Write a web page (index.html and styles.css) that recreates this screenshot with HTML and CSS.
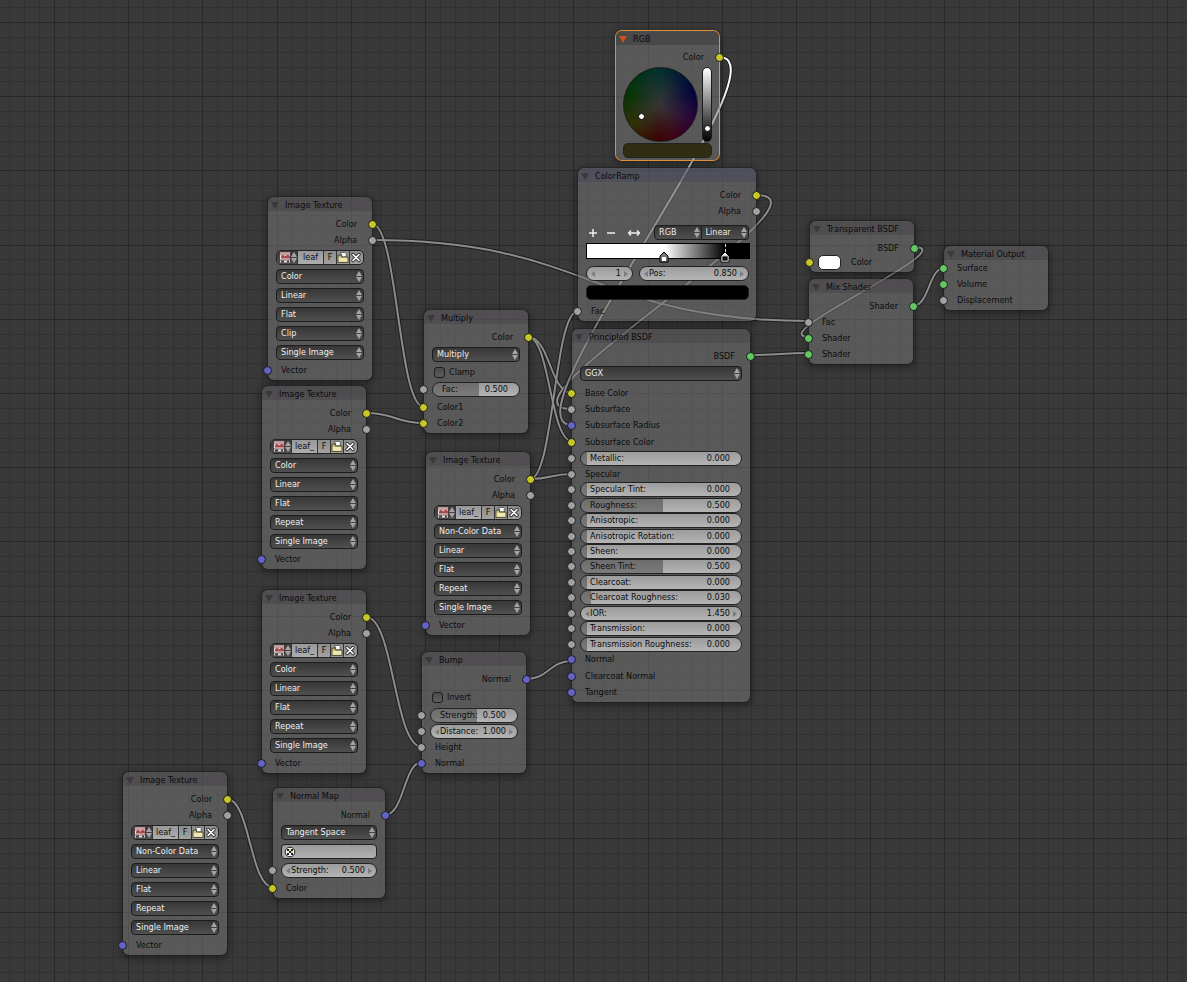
FILE: index.html
```
<!DOCTYPE html>
<html lang="en">
  <head>
    <meta charset="UTF-8" />
    <meta name="viewport" content="width=device-width, initial-scale=1" />
    <title>Leaf material - node editor</title>
    <link rel="stylesheet" href="styles.css">
  </head>

  <body>
    <!-- shared icons -->
    <svg class="defs" aria-hidden="true">
      <symbol id="icon-image" viewBox="0 0 12 12">
        <rect x=".5" y=".5" width="11" height="11" fill="#e9e4e2" stroke="#4a4040"/>
        <path d="M1 1h10v3H1z" fill="#c9a0a2"/>
        <path d="M2 5l2-2 2 2 3-2 2 2v2H2z" fill="#a8484e"/>
        <path d="M1 8h10v1H1z" fill="#7a5a5c"/>
        <path d="M2 9h3v2H2zM8 9h2v2H8z" fill="#3c3c46"/>
      </symbol>
      <symbol id="icon-folder" viewBox="0 0 13 13">
        <path d="M4 1h5l1 1v4H4z" fill="#fff" stroke="#555"/>
        <path d="M1 4h3v-1h1v3h7v6H1z" fill="#c9c084" stroke="#4c4830"/>
        <path d="M2 7h9v4H2z" fill="#efe8b4"/>
      </symbol>
      <symbol id="icon-close" viewBox="0 0 12 12">
        <path d="M3 3l6 6M9 3l-6 6" stroke="#333" stroke-width="3.4" stroke-linecap="round"/>
        <path d="M3 3l6 6M9 3l-6 6" stroke="#fff" stroke-width="1.6" stroke-linecap="round"/>
      </symbol>
      <symbol id="icon-uv" viewBox="0 0 12 12">
        <circle cx="6" cy="6" r="4.8" fill="#f4f4f4" stroke="#222"/>
        <path d="M3 3h2v2H3zM7 3h2v2H7zM5 5h2v2H5zM3 7h2v2H3zM7 7h2v2H7z" fill="#222"/>
        <path d="M5 3h2v2H5zM7 5h2v2H7z" fill="#d9d98a"/>
      </symbol>
    </svg>

    <main class="canvas">
      <!-- background grid -->
      <svg class="grid" aria-hidden="true">
        <defs>
          <pattern id="grid" x="54" y="22" width="371" height="371" patternUnits="userSpaceOnUse">
            <path class="minor" d="M15.5 0V371M30.5 0V371M45.5 0V371M59.5 0V371M89.5 0V371M104.5 0V371M119.5 0V371M134.5 0V371M163.5 0V371M178.5 0V371M193.5 0V371M208.5 0V371M237.5 0V371M252.5 0V371M267.5 0V371M282.5 0V371M312.5 0V371M326.5 0V371M341.5 0V371M356.5 0V371"/>
            <path class="minor" d="M0 15.5H371M0 30.5H371M0 45.5H371M0 59.5H371M0 89.5H371M0 104.5H371M0 119.5H371M0 134.5H371M0 163.5H371M0 178.5H371M0 193.5H371M0 208.5H371M0 237.5H371M0 252.5H371M0 267.5H371M0 282.5H371M0 312.5H371M0 326.5H371M0 341.5H371M0 356.5H371"/>
            <path class="major" d="M.5 0V371M74.5 0V371M148.5 0V371M223.5 0V371M297.5 0V371M0 .5H371M0 74.5H371M0 148.5H371M0 223.5H371M0 297.5H371"/>
          </pattern>
        </defs>
        <rect width="100%" height="100%" fill="url(#grid)"/>
      </svg>

      <!-- links, drawn under the translucent nodes -->
      <svg class="wires" aria-hidden="true">
        <defs>
          <linearGradient id="picked" gradientUnits="userSpaceOnUse" x1="0" y1="57" x2="0" y2="426">
            <stop offset="0" stop-color="#fff"/>
            <stop offset=".15" stop-color="#f0f0f0"/>
            <stop offset=".32" stop-color="#bbb"/>
            <stop offset="1" stop-color="#888"/>
          </linearGradient>
          <g id="links">
            <path d="M372 224C398 224 398 407 424 407"/>
            <path d="M372 240C591 240 591 321 810 321"/>
            <path d="M366 413C395 413 395 423 424 423"/>
            <path d="M528 337C550 337 550 393 572 393"/>
            <path d="M528 337C550 337 550 441 572 441"/>
            <path d="M530 479C551 479 551 474 572 474"/>
            <path d="M530 479C554 479 554 311 578 311"/>
            <path d="M526 679C549 679 549 661 572 661"/>
            <path d="M366 617C394 617 394 747 422 747"/>
            <path d="M385 815C404 815 404 762 422 762"/>
            <path d="M227 799C250 799 250 887 273 887"/>
            <path d="M750 355C780 355 780 353 810 353"/>
            <path d="M914 247C966 247 758 337 810 337"/>
            <path d="M913 306C929 306 929 268 944 268"/>
            <path d="M756 195C848 195 480 409 572 409"/>
          </g>
          <path id="picked-link" d="M719 57C792 57 499 425 572 425"/>
        </defs>
        <use href="#links" class="edge"/>
        <use href="#links" class="core"/>
        <use href="#picked-link" class="edge"/>
        <use href="#picked-link" class="core picked"/>
      </svg>

      <!-- RGB -->
      <section class="node node-rgb selected">
        <h2>RGB</h2>
        <div class="body">
          <div class="row out">Color<i class="socket color"></i></div>
          <div class="picker">
            <div class="wheel"><i class="knob"></i></div>
            <div class="value"><i class="knob"></i></div>
          </div>
          <button class="swatch olive" aria-label="Picked color"></button>
        </div>
      </section>

      <!-- ColorRamp -->
      <section class="node node-ramp">
        <h2>ColorRamp</h2>
        <div class="body">
          <div class="row out">Color<i class="socket color"></i></div>
          <div class="row out">Alpha<i class="socket"></i></div>
          <div class="ramp-tools">
            <button aria-label="Add stop"><svg viewBox="0 0 12 12"><path d="M6 2v8M2 6h8"/></svg></button>
            <button aria-label="Remove stop"><svg viewBox="0 0 12 12"><path d="M2 6h8"/></svg></button>
            <button aria-label="Flip"><svg viewBox="0 0 12 12"><path d="M1 6h10M3 3.5L.5 6 3 8.500M9 3.5L11.5 6 9 8.500"/></svg></button>
            <div class="dropdown first"><select aria-label="Color mode"><option>RGB</option><option>HSV</option></select></div>
            <div class="dropdown last"><select aria-label="Interpolation"><option>Linear</option><option>Ease</option></select></div>
          </div>
          <div class="ramp">
            <svg class="stop stop-a" viewBox="0 0 10 12"><path d="M1 11V5l4-4 4 4v6z" fill="#777" stroke="#000"/><path d="M3 6h4v4H3z" fill="#fff"/></svg>
            <i class="stop-line"></i>
            <svg class="stop stop-b" viewBox="0 0 10 12"><path d="M1 11V5l4-4 4 4v6z" fill="#fff" stroke="#000"/><path d="M2 5h6v5H2z" fill="#111" stroke="#aaa"/></svg>
          </div>
          <div class="ramp-fields">
            <label class="field number"><input type="text" value="1" aria-label="Active stop"></label>
            <label class="field number">Pos:<input type="text" value="0.850"></label>
          </div>
          <button class="swatch black" aria-label="Stop color"></button>
          <div class="row in">Fac<i class="socket"></i></div>
        </div>
      </section>

      <!-- Principled BSDF -->
      <section class="node node-principled">
        <h2>Principled BSDF</h2>
        <div class="body">
          <div class="row out">BSDF<i class="socket shader"></i></div>
          <div class="dropdown"><select aria-label="Distribution"><option>GGX</option><option>Multiscatter GGX</option></select></div>
          <div class="stack">
            <div class="row in">Base Color<i class="socket color"></i></div>
            <div class="row in">Subsurface<i class="socket"></i></div>
            <div class="row in">Subsurface Radius<i class="socket vector"></i></div>
            <div class="row in">Subsurface Color<i class="socket color"></i></div>
            <div class="row"><i class="socket"></i><label class="field" style="--fill: 4%">Metallic:<input type="text" value="0.000"></label></div>
            <div class="row in">Specular<i class="socket"></i></div>
            <div class="row"><i class="socket"></i><label class="field" style="--fill: 4%">Specular Tint:<input type="text" value="0.000"></label></div>
            <div class="row"><i class="socket"></i><label class="field" style="--fill: 51%">Roughness:<input type="text" value="0.500"></label></div>
            <div class="row"><i class="socket"></i><label class="field" style="--fill: 4%">Anisotropic:<input type="text" value="0.000"></label></div>
            <div class="row"><i class="socket"></i><label class="field" style="--fill: 4%">Anisotropic Rotation:<input type="text" value="0.000"></label></div>
            <div class="row"><i class="socket"></i><label class="field" style="--fill: 4%">Sheen:<input type="text" value="0.000"></label></div>
            <div class="row"><i class="socket"></i><label class="field" style="--fill: 51%">Sheen Tint:<input type="text" value="0.500"></label></div>
            <div class="row"><i class="socket"></i><label class="field" style="--fill: 4%">Clearcoat:<input type="text" value="0.000"></label></div>
            <div class="row"><i class="socket"></i><label class="field" style="--fill: 6%">Clearcoat Roughness:<input type="text" value="0.030"></label></div>
            <div class="row"><i class="socket"></i><label class="field number">IOR:<input type="text" value="1.450"></label></div>
            <div class="row"><i class="socket"></i><label class="field" style="--fill: 4%">Transmission:<input type="text" value="0.000"></label></div>
            <div class="row"><i class="socket"></i><label class="field" style="--fill: 4%">Transmission Roughness:<input type="text" value="0.000"></label></div>
            <div class="row in">Normal<i class="socket vector"></i></div>
            <div class="row in">Clearcoat Normal<i class="socket vector"></i></div>
            <div class="row in">Tangent<i class="socket vector"></i></div>
          </div>
        </div>
      </section>

      <!-- Transparent BSDF -->
      <section class="node node-transparent">
        <h2>Transparent BSDF</h2>
        <div class="body">
          <div class="row out">BSDF<i class="socket shader"></i></div>
          <div class="row color-row"><i class="socket color"></i><button class="swatch white" aria-label="Transparent color"></button>Color</div>
        </div>
      </section>

      <!-- Mix Shader -->
      <section class="node node-mix">
        <h2>Mix Shader</h2>
        <div class="body">
          <div class="row out">Shader<i class="socket shader"></i></div>
          <div class="row in">Fac<i class="socket"></i></div>
          <div class="row in">Shader<i class="socket shader"></i></div>
          <div class="row in">Shader<i class="socket shader"></i></div>
        </div>
      </section>

      <!-- Material Output -->
      <section class="node node-output">
        <h2>Material Output</h2>
        <div class="body">
          <div class="row in">Surface<i class="socket shader"></i></div>
          <div class="row in">Volume<i class="socket shader"></i></div>
          <div class="row in">Displacement<i class="socket"></i></div>
        </div>
      </section>

      <!-- Image Texture 1 -->
      <section class="node node-image-1">
        <h2>Image Texture</h2>
        <div class="body">
          <div class="row out">Color<i class="socket color"></i></div>
          <div class="row out">Alpha<i class="socket"></i></div>
          <div class="image-bar">
            <button class="browse" aria-label="Browse image"><svg><use href="#icon-image"/></svg></button>
            <input type="text" value="leaf" aria-label="Image name">
            <button>F</button>
            <button aria-label="Open image"><svg><use href="#icon-folder"/></svg></button>
            <button aria-label="Unlink image"><svg><use href="#icon-close"/></svg></button>
          </div>
          <div class="dropdown"><select aria-label="Color space"><option>Color</option><option>Non-Color Data</option></select></div>
          <div class="dropdown"><select aria-label="Interpolation"><option>Linear</option><option>Closest</option></select></div>
          <div class="dropdown"><select aria-label="Projection"><option>Flat</option><option>Box</option></select></div>
          <div class="dropdown"><select aria-label="Extension"><option>Clip</option><option>Repeat</option></select></div>
          <div class="dropdown"><select aria-label="Source"><option>Single Image</option><option>Movie</option></select></div>
          <div class="row in">Vector<i class="socket vector"></i></div>
        </div>
      </section>

      <!-- Image Texture 2 -->
      <section class="node node-image-2">
        <h2>Image Texture</h2>
        <div class="body">
          <div class="row out">Color<i class="socket color"></i></div>
          <div class="row out">Alpha<i class="socket"></i></div>
          <div class="image-bar">
            <button class="browse" aria-label="Browse image"><svg><use href="#icon-image"/></svg></button>
            <input type="text" value="leaf_" aria-label="Image name">
            <button>F</button>
            <button aria-label="Open image"><svg><use href="#icon-folder"/></svg></button>
            <button aria-label="Unlink image"><svg><use href="#icon-close"/></svg></button>
          </div>
          <div class="dropdown"><select aria-label="Color space"><option>Color</option><option>Non-Color Data</option></select></div>
          <div class="dropdown"><select aria-label="Interpolation"><option>Linear</option><option>Closest</option></select></div>
          <div class="dropdown"><select aria-label="Projection"><option>Flat</option><option>Box</option></select></div>
          <div class="dropdown"><select aria-label="Extension"><option>Repeat</option><option>Clip</option></select></div>
          <div class="dropdown"><select aria-label="Source"><option>Single Image</option><option>Movie</option></select></div>
          <div class="row in">Vector<i class="socket vector"></i></div>
        </div>
      </section>

      <!-- Image Texture 3 -->
      <section class="node node-image-3">
        <h2>Image Texture</h2>
        <div class="body">
          <div class="row out">Color<i class="socket color"></i></div>
          <div class="row out">Alpha<i class="socket"></i></div>
          <div class="image-bar">
            <button class="browse" aria-label="Browse image"><svg><use href="#icon-image"/></svg></button>
            <input type="text" value="leaf_" aria-label="Image name">
            <button>F</button>
            <button aria-label="Open image"><svg><use href="#icon-folder"/></svg></button>
            <button aria-label="Unlink image"><svg><use href="#icon-close"/></svg></button>
          </div>
          <div class="dropdown"><select aria-label="Color space"><option>Color</option><option>Non-Color Data</option></select></div>
          <div class="dropdown"><select aria-label="Interpolation"><option>Linear</option><option>Closest</option></select></div>
          <div class="dropdown"><select aria-label="Projection"><option>Flat</option><option>Box</option></select></div>
          <div class="dropdown"><select aria-label="Extension"><option>Repeat</option><option>Clip</option></select></div>
          <div class="dropdown"><select aria-label="Source"><option>Single Image</option><option>Movie</option></select></div>
          <div class="row in">Vector<i class="socket vector"></i></div>
        </div>
      </section>

      <!-- Image Texture 4 -->
      <section class="node node-image-4">
        <h2>Image Texture</h2>
        <div class="body">
          <div class="row out">Color<i class="socket color"></i></div>
          <div class="row out">Alpha<i class="socket"></i></div>
          <div class="image-bar">
            <button class="browse" aria-label="Browse image"><svg><use href="#icon-image"/></svg></button>
            <input type="text" value="leaf_" aria-label="Image name">
            <button>F</button>
            <button aria-label="Open image"><svg><use href="#icon-folder"/></svg></button>
            <button aria-label="Unlink image"><svg><use href="#icon-close"/></svg></button>
          </div>
          <div class="dropdown"><select aria-label="Color space"><option>Non-Color Data</option><option>Color</option></select></div>
          <div class="dropdown"><select aria-label="Interpolation"><option>Linear</option><option>Closest</option></select></div>
          <div class="dropdown"><select aria-label="Projection"><option>Flat</option><option>Box</option></select></div>
          <div class="dropdown"><select aria-label="Extension"><option>Repeat</option><option>Clip</option></select></div>
          <div class="dropdown"><select aria-label="Source"><option>Single Image</option><option>Movie</option></select></div>
          <div class="row in">Vector<i class="socket vector"></i></div>
        </div>
      </section>

      <!-- Image Texture 5 -->
      <section class="node node-image-5">
        <h2>Image Texture</h2>
        <div class="body">
          <div class="row out">Color<i class="socket color"></i></div>
          <div class="row out">Alpha<i class="socket"></i></div>
          <div class="image-bar">
            <button class="browse" aria-label="Browse image"><svg><use href="#icon-image"/></svg></button>
            <input type="text" value="leaf_" aria-label="Image name">
            <button>F</button>
            <button aria-label="Open image"><svg><use href="#icon-folder"/></svg></button>
            <button aria-label="Unlink image"><svg><use href="#icon-close"/></svg></button>
          </div>
          <div class="dropdown"><select aria-label="Color space"><option>Non-Color Data</option><option>Color</option></select></div>
          <div class="dropdown"><select aria-label="Interpolation"><option>Linear</option><option>Closest</option></select></div>
          <div class="dropdown"><select aria-label="Projection"><option>Flat</option><option>Box</option></select></div>
          <div class="dropdown"><select aria-label="Extension"><option>Repeat</option><option>Clip</option></select></div>
          <div class="dropdown"><select aria-label="Source"><option>Single Image</option><option>Movie</option></select></div>
          <div class="row in">Vector<i class="socket vector"></i></div>
        </div>
      </section>

      <!-- Multiply -->
      <section class="node node-multiply">
        <h2>Multiply</h2>
        <div class="body">
          <div class="row out">Color<i class="socket color"></i></div>
          <div class="dropdown"><select aria-label="Blend type"><option>Multiply</option><option>Mix</option></select></div>
          <label class="row check"><input type="checkbox">Clamp</label>
          <div class="row wide"><i class="socket"></i><label class="field" style="--fill: 53%">Fac:<input type="text" value="0.500"></label></div>
          <div class="row in">Color1<i class="socket color"></i></div>
          <div class="row in">Color2<i class="socket color"></i></div>
        </div>
      </section>

      <!-- Bump -->
      <section class="node node-bump">
        <h2>Bump</h2>
        <div class="body">
          <div class="row out">Normal<i class="socket vector"></i></div>
          <label class="row check"><input type="checkbox">Invert</label>
          <div class="stack">
            <div class="row"><i class="socket"></i><label class="field" style="--fill: 53%">Strength:<input type="text" value="0.500"></label></div>
            <div class="row"><i class="socket"></i><label class="field number">Distance:<input type="text" value="1.000"></label></div>
            <div class="row in">Height<i class="socket"></i></div>
            <div class="row in">Normal<i class="socket vector"></i></div>
          </div>
        </div>
      </section>

      <!-- Normal Map -->
      <section class="node node-normal">
        <h2>Normal Map</h2>
        <div class="body">
          <div class="row out">Normal<i class="socket vector"></i></div>
          <div class="dropdown"><select aria-label="Space"><option>Tangent Space</option><option>Object Space</option></select></div>
          <label class="uv-field"><svg><use href="#icon-uv"/></svg><input type="text" aria-label="UV map"></label>
          <div class="row wide"><i class="socket"></i><label class="field number">Strength:<input type="text" value="0.500"></label></div>
          <div class="row in">Color<i class="socket color"></i></div>
        </div>
      </section>
    </main>
  </body>
</html>
```
FILE: styles.css
```
* {
    box-sizing: border-box;
    margin: 0;
    padding: 0;
}
body {
    background-color: #393939;
    color: #0c0c0c;
    font-family: "DejaVu Sans Condensed", "DejaVu Sans", sans-serif;
    font-size: 9px;
    line-height: 15px;
}
input, select, button {
    font: inherit;
    color: inherit;
    border: none;
    background: none;
    appearance: none;
    outline: none;
    min-width: 0;
}
.defs {
    display: none;
}
.canvas {
    position: relative;
    min-height: 100vh;
    overflow: hidden;
}

/* grid and links */
.grid, .wires {
    position: absolute;
    inset: 0;
    width: 100%;
    height: 100%;
}
.grid path {
    fill: none;
}
.minor {
    stroke: #313131;
}
.major {
    stroke: #282828;
}
.wires {
    fill: none;
}
.edge {
    stroke: rgba(24, 24, 24, 0.8);
    stroke-width: 4px;
}
.core {
    stroke: #8c8c8c;
    stroke-width: 2px;
}
.core.picked {
    stroke: url(#picked);
}

/* nodes */
.node {
    position: absolute;
    width: 104px;
    border-radius: 6px;
    background-color: rgba(117, 117, 117, 0.54);
    box-shadow: 0 0 0 1px rgba(20, 20, 20, 0.3), 0 2px 7px 2px rgba(0, 0, 0, 0.35);
}
.node h2 {
    position: relative;
    height: 14px;
    padding: 1px 0 0 17px;
    border-radius: 6px 6px 0 0;
    background-color: rgba(64, 56, 66, 0.35);
    font-size: 9px;
    font-weight: normal;
    white-space: nowrap;
}
.node h2::before {
    content: "";
    position: absolute;
    left: 3px;
    top: 5px;
    border: 4px solid transparent;
    border-top: 7px solid #3a3a3a;
    border-bottom: none;
}
.body {
    display: flex;
    flex-direction: column;
    padding: 5px 0 2px;
}
.node-rgb { left: 616px; top: 31px; width: 103px; }
.node-ramp { left: 578px; top: 168px; width: 178px; }
.node-principled { left: 572px; top: 329px; width: 178px; }
.node-transparent { left: 810px; top: 221px; }
.node-mix { left: 809px; top: 279px; }
.node-output { left: 944px; top: 246px; }
.node-image-1 { left: 268px; top: 197px; }
.node-image-2 { left: 262px; top: 386px; }
.node-image-3 { left: 262px; top: 590px; }
.node-image-4 { left: 123px; top: 772px; }
.node-image-5 { left: 426px; top: 452px; }
.node-multiply { left: 424px; top: 310px; }
.node-bump { left: 422px; top: 652px; }
.node-normal { left: 273px; top: 788px; width: 112px; }

.node-ramp h2 {
    background-color: rgba(68, 68, 92, 0.4);
}
.node-rgb h2 {
    background-color: rgba(50, 50, 50, 0.4);
}
.node-output .body {
    padding-top: 0;
}
.selected {
    box-shadow: 0 0 0 1px #e0903c, 0 2px 7px 2px rgba(0, 0, 0, 0.35);
}
.selected h2::before {
    border-top-color: #c8521a;
}
.selected .body {
    padding-top: 4px;
}

/* rows and sockets */
.row {
    position: relative;
    display: flex;
    align-items: center;
    height: 16px;
    padding: 0 8px;
    white-space: nowrap;
}
.row.in {
    padding-left: 13px;
}
.row.out {
    justify-content: flex-end;
    padding-right: 15px;
}
.row.wide {
    height: 15px;
    margin: 2px 0;
}
.stack {
    display: flex;
    flex-direction: column;
    justify-content: space-between;
    gap: 1px;
    margin-top: 2px;
}
.stack .row {
    height: 15px;
}
.node-principled .stack {
    gap: 0;
    height: 316px;
}
.node-principled .stack .in {
    height: 16px;
}
.node-principled .body {
    padding-bottom: 1px;
}
.socket {
    position: absolute;
    left: -5px;
    width: 9px;
    height: 9px;
    border: 1px solid #1a1a1a;
    border-radius: 50%;
    background-color: #a1a1a1;
}
.out .socket {
    left: auto;
    right: -5px;
}
.socket.color {
    background-color: #c7c729;
}
.socket.vector {
    background-color: #6363c7;
}
.socket.shader {
    background-color: #63c763;
}

/* dropdowns */
.dropdown {
    position: relative;
    height: 15px;
    margin: 2px 8px;
}
.dropdown select {
    display: block;
    width: 100%;
    height: 15px;
    padding: 0 14px 0 4px;
    border: 1px solid #1c1c1c;
    border-radius: 4px;
    background: linear-gradient(#373737, #4f4f4f);
    color: #eee;
    line-height: 13px;
}
.dropdown::before, .dropdown::after, .browse::before, .browse::after {
    content: "";
    position: absolute;
    right: 2px;
    top: 2px;
    border: 3px solid transparent;
    border-top: none;
    border-bottom: 5px solid #a4a4a4;
}
.dropdown::after, .browse::after {
    top: 8px;
    border-top: 5px solid #a4a4a4;
    border-bottom: none;
}

/* sliders and number fields */
.field {
    position: relative;
    display: flex;
    flex: 1;
    align-items: center;
    min-width: 0;
    height: 15px;
    padding: 0 11px 0 9px;
    border: 1px solid #222;
    border-radius: 8px;
    background:
        linear-gradient(90deg, rgba(30, 30, 30, 0.38) var(--fill, 0%), transparent var(--fill, 0%)),
        linear-gradient(#9c9c9c, #b4b4b4);
    line-height: 13px;
    white-space: nowrap;
}
.field input {
    flex: 1;
    width: 0;
    text-align: right;
}
.number::before, .number::after {
    content: "";
    position: absolute;
    top: 4px;
    left: 4px;
    border: 3px solid transparent;
    border-left: none;
    border-right: 4px solid #7c7c7c;
}
.number::after {
    left: auto;
    right: 4px;
    border-left: 4px solid #7c7c7c;
    border-right: none;
}

/* image datablock */
.image-bar {
    display: grid;
    grid-template-columns: 21px 26px 13px 13px 13px;
    height: 15px;
    margin: 2px 8px;
    border: 1px solid #222;
    border-radius: 5px;
    background: linear-gradient(#8c8c8c, #a2a2a2);
    overflow: hidden;
}
.image-bar > * {
    border-right: 1px solid #333;
    line-height: 13px;
    text-align: center;
}
.image-bar > :last-child {
    border-right: none;
}
.image-bar input {
    background: linear-gradient(#999, #aeaeae);
}
.image-bar svg {
    display: block;
    width: 12px;
    height: 13px;
}
.image-bar .browse {
    position: relative;
    padding-left: 2px;
    background: linear-gradient(#373737, #4f4f4f);
}
.browse::before, .browse::after {
    right: 0;
    top: 1px;
}
.browse::after {
    top: 7px;
}

/* checkboxes */
.check {
    gap: 4px;
    padding: 0 10px;
}
.check input {
    width: 11px;
    height: 11px;
    border: 1px solid #1c1c1c;
    border-radius: 3px;
    background: linear-gradient(#4a4a4a, #5c5c5c);
}
.node-bump .check {
    margin: 2px 0 1px;
}

/* color picker */
.picker {
    display: flex;
    justify-content: space-between;
    margin: 2px 7px 1px;
}
.wheel, .value {
    position: relative;
    height: 75px;
    border: 1px solid #1c1c1c;
}
.wheel {
    width: 75px;
    border-radius: 50%;
    background:
        radial-gradient(closest-side, #343434, transparent),
        conic-gradient(#003030, #00003c 70deg, #2c0038 115deg, #400010 160deg, #3c0000 185deg, #303000 235deg, #003600 290deg, #003030);
}
.value {
    width: 10px;
    border-radius: 5px;
    background: linear-gradient(#fff, #000);
}
.knob {
    position: absolute;
    left: 14px;
    top: 45px;
    width: 7px;
    height: 7px;
    border: 1px solid #000;
    border-radius: 50%;
    background-color: #fff;
}
.value .knob {
    left: 1px;
    top: 57px;
}
.swatch {
    height: 15px;
    margin: 0 7px 0 8px;
    border: 1px solid #222;
    border-radius: 5px;
}
.olive {
    margin: 0 7px;
    background-color: #2f2e12;
}
.black {
    background-color: #000;
}
.white {
    width: 23px;
    margin: 0 10px 0 0;
    background-color: #fff;
}
.color-row {
    height: 12px;
    margin-bottom: 2px;
}

/* color ramp */
.ramp-tools {
    display: flex;
    margin: 6px 7px 3px 8px;
}
.ramp-tools button {
    width: 18px;
    height: 15px;
    padding-right: 4px;
}
.ramp-tools button:nth-child(3) {
    width: 32px;
    padding-right: 8px;
}
.ramp-tools button svg {
    display: block;
    width: 12px;
    height: 12px;
    margin: auto;
    fill: none;
    stroke: #eee;
    stroke-width: 1.5;
}
.ramp-tools .dropdown {
    flex: 1;
    margin: 0;
}
.first select {
    border-radius: 4px 0 0 4px;
}
.last select {
    border-left: none;
    border-radius: 0 4px 4px 0;
}
.ramp {
    position: relative;
    height: 16px;
    margin: 0 6px 7px 8px;
    border: 1px solid #000;
    background: linear-gradient(90deg, #fff 48%, #000 85%);
}
.stop {
    position: absolute;
    top: 7px;
    width: 10px;
    height: 12px;
}
.stop-a {
    left: 72px;
}
.stop-b {
    left: 133px;
}
.stop-line {
    position: absolute;
    left: 138px;
    height: 8px;
    border-left: 1px dashed #ddd;
}
.ramp-fields {
    display: grid;
    grid-template-columns: 47px 1fr;
    gap: 6px;
    margin: 0 7px 4px 8px;
}
.node-ramp .row.in {
    margin-top: 3px;
}

/* uv map field */
.uv-field {
    display: flex;
    align-items: center;
    height: 15px;
    margin: 2px 8px;
    padding-left: 2px;
    border: 1px solid #222;
    border-radius: 4px;
    background: linear-gradient(#9a9a9a, #b2b2b2);
}
.uv-field svg {
    width: 12px;
    height: 12px;
}
.uv-field input {
    flex: 1;
}
```
